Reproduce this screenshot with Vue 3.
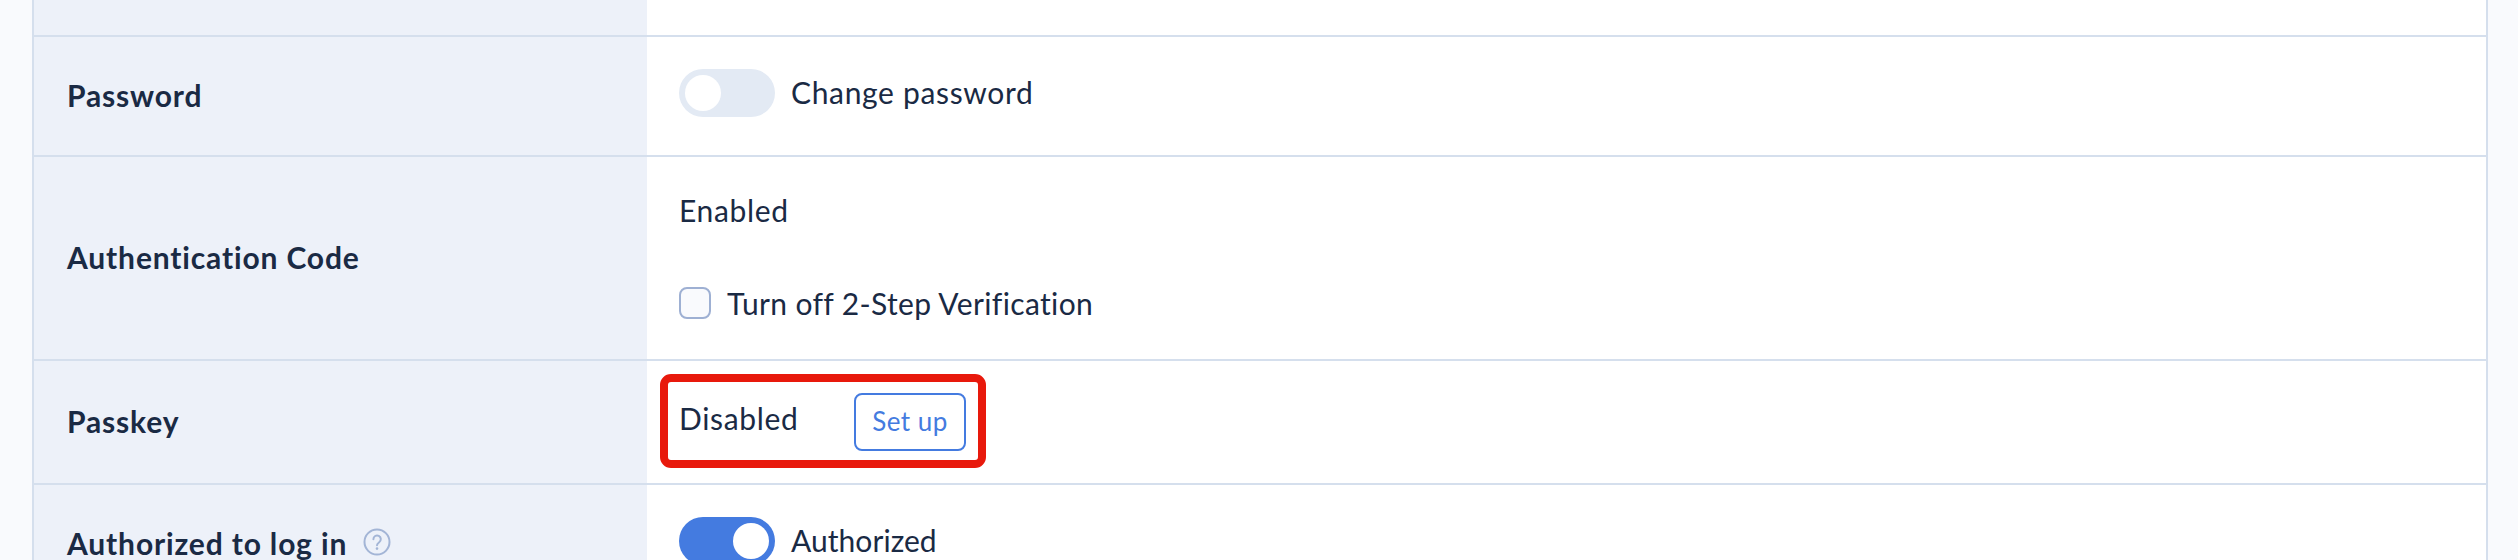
<script setup>
import { ref } from 'vue'

const changePassword = ref(false)
const authorized = ref(true)
const turnOff = ref(false)
</script>

<template>
  <div class="page">
    <div class="table">
      <div class="row row-top">
        <div class="label"></div>
        <div class="value"></div>
      </div>

      <div class="row row-password">
        <div class="label">Password</div>
        <div class="value value-switch">
          <button class="switch" :class="{ on: changePassword }" @click="changePassword = !changePassword">
            <span class="knob"></span>
          </button>
          <span class="text">Change password</span>
        </div>
      </div>

      <div class="row row-code">
        <div class="label">Authentication Code</div>
        <div class="value value-code">
          <div class="text">Enabled</div>
          <label class="check">
            <span class="box" :class="{ checked: turnOff }" @click="turnOff = !turnOff"></span>
            <span class="text">Turn off 2-Step Verification</span>
          </label>
        </div>
      </div>

      <div class="row row-passkey">
        <div class="label">Passkey</div>
        <div class="value value-passkey">
          <span class="text status">Disabled</span>
          <button class="setup">Set up</button>
          <div class="highlight"></div>
        </div>
      </div>

      <div class="row row-auth">
        <div class="label">
          Authorized to log in
          <svg class="help" viewBox="0 0 28 28" fill="none">
            <circle cx="14" cy="14" r="12.5" stroke="#a3b5d6" stroke-width="2" />
            <path d="M10.4 11.2a3.7 3.7 0 1 1 5.8 3c-1.4 1-2.2 1.6-2.2 3" stroke="#a3b5d6" stroke-width="2" stroke-linecap="round" />
            <circle cx="14" cy="20.6" r="1.3" fill="#a3b5d6" />
          </svg>
        </div>
        <div class="value value-switch">
          <button class="switch" :class="{ on: authorized }" @click="authorized = !authorized">
            <span class="knob"></span>
          </button>
          <span class="text authorized">Authorized</span>
        </div>
      </div>
    </div>
  </div>
</template>

<style>
html,
body {
  margin: 0;
  background: #f9fafd;
}
</style>

<style scoped>
.page {
  height: 560px;
  overflow: hidden;
  padding: 0 30px 0 32px;
  box-sizing: border-box;
  font-family: Lato, 'Liberation Sans', sans-serif;
  color: #1a2a44;
}
.table {
  background: #fff;
  border-left: 2px solid #d5dfed;
  border-right: 2px solid #d5dfed;
}
.row {
  display: grid;
  grid-template-columns: 613px 1fr;
  border-bottom: 2px solid #d5dfed;
  box-sizing: content-box;
}
.row-top {
  height: 35px;
}
.row-password {
  height: 118px;
}
.row-code {
  height: 202px;
}
.row-passkey {
  height: 122px;
}
.row-auth {
  height: 118px;
  border-bottom: 0;
}
.label {
  display: flex;
  align-items: center;
  gap: 16px;
  padding: 0 0 3px 33px;
  background: #edf1f9;
  font-size: 30px;
  font-weight: 700;
  letter-spacing: 0.85px;
}
.value {
  position: relative;
  display: flex;
  align-items: center;
  padding-left: 32px;
}
.text {
  font-size: 30px;
  letter-spacing: 0.66px;
}
.value-switch {
  gap: 16px;
  padding-bottom: 6px;
}
.value-switch .text {
  padding-bottom: 3px;
}
.value-switch .authorized {
  letter-spacing: 0.05px;
}
.switch {
  display: flex;
  align-items: center;
  width: 96px;
  height: 48px;
  padding: 0 6px;
  border: 0;
  border-radius: 24px;
  background: #e3eaf4;
}
.switch.on {
  justify-content: flex-end;
  background: #447be0;
}
.knob {
  width: 36px;
  height: 36px;
  border-radius: 50%;
  background: #fff;
}
.value-code {
  flex-direction: column;
  align-items: flex-start;
  justify-content: flex-start;
  gap: 57px;
  padding-top: 35px;
}
.check {
  display: flex;
  align-items: center;
  gap: 16px;
}
.check .text {
  letter-spacing: 0.36px;
}
.box {
  width: 32px;
  height: 32px;
  box-sizing: border-box;
  border: 2px solid #9eb0d3;
  border-radius: 8px;
  background: #f9fafd;
}
.status {
  width: 175px;
  padding-bottom: 8px;
}
.setup {
  width: 112px;
  height: 58px;
  padding: 0 0 2px;
  border: 2px solid #447be0;
  border-radius: 8px;
  background: #fff;
  color: #447be0;
  font-family: inherit;
  font-size: 26px;
  letter-spacing: 0.5px;
}
.highlight {
  position: absolute;
  top: 13px;
  left: 13px;
  width: 326px;
  height: 94px;
  box-sizing: border-box;
  border: 8px solid #e8190c;
  border-radius: 11px;
  pointer-events: none;
}
.help {
  width: 28px;
  height: 28px;
  margin-bottom: 2px;
}
</style>
